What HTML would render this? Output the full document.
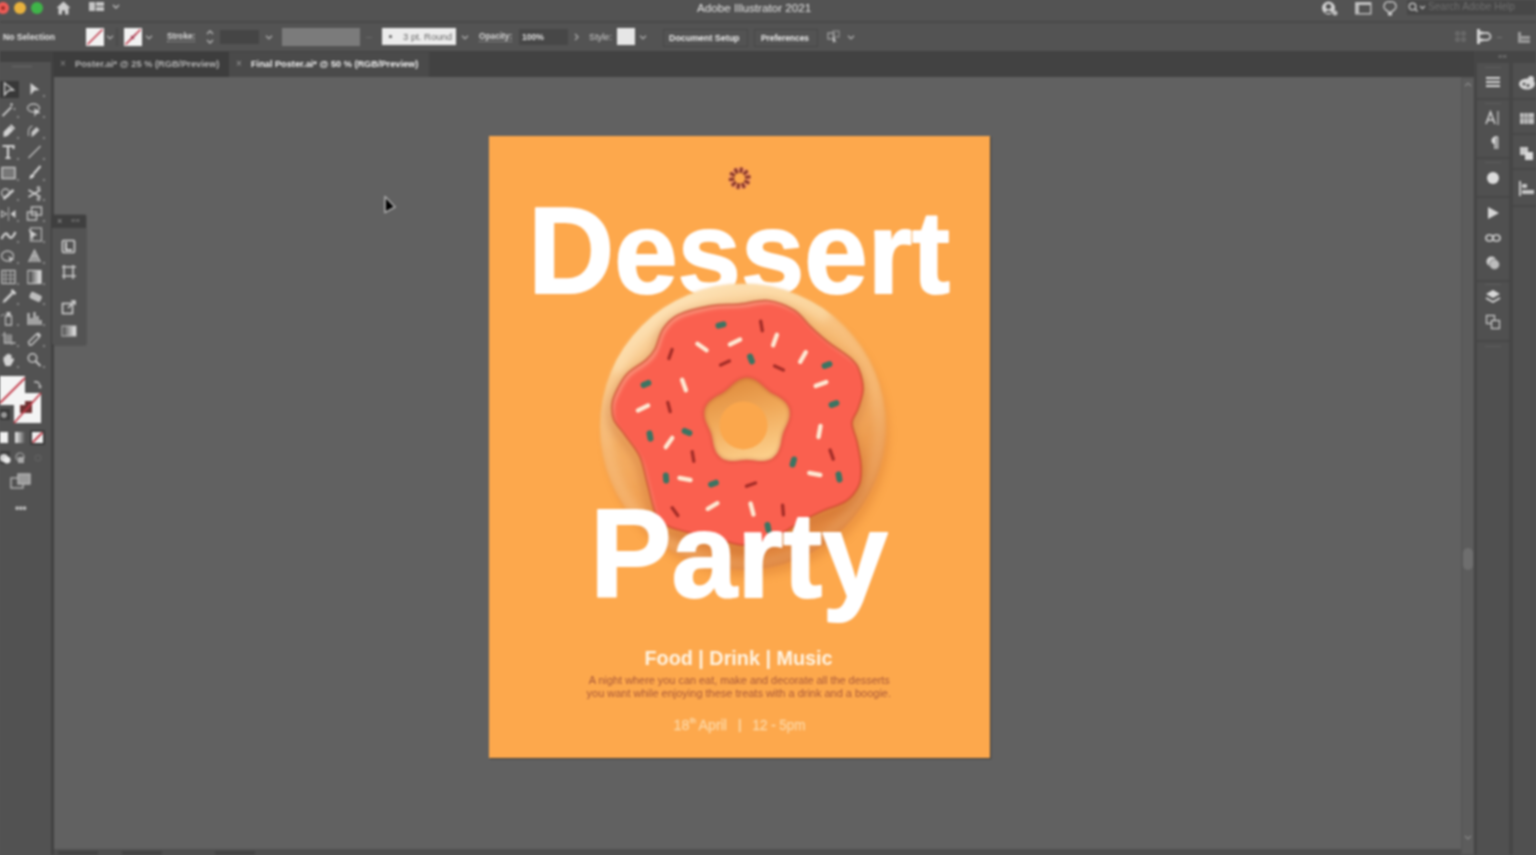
<!DOCTYPE html>
<html><head><meta charset="utf-8">
<style>
*{margin:0;padding:0;box-sizing:border-box}
html,body{width:1536px;height:855px;overflow:hidden;background:#555555;font-family:"Liberation Sans",sans-serif;position:relative}
.a{position:absolute}
.t{position:absolute;white-space:nowrap;color:#cfcfcf;font-size:9px;line-height:10px}
svg{position:absolute;overflow:visible}
</style></head><body>
<div id="root" style="position:absolute;left:0;top:0;width:1536px;height:855px;filter:blur(0.8px)">
<div class="a" style="left:0;top:0;width:1536px;height:855px;background:#616161"></div>
<div class="a" style="left:0;top:0;width:1536px;height:21px;background:#535353"></div>
<div class="a" style="left:0;top:21px;width:1536px;height:2px;background:#484848"></div>
<div class="a" style="left:-3px;top:2px;width:12px;height:12px;border-radius:50%;background:#EC5B56"></div>
<div class="a" style="left:1px;top:6px;width:4px;height:4px;border-radius:50%;background:#9a2a25"></div>
<div class="a" style="left:14px;top:2px;width:12px;height:12px;border-radius:50%;background:#E8B23E"></div>
<div class="a" style="left:31px;top:2px;width:12px;height:12px;border-radius:50%;background:#3FB449"></div>
<svg style="left:56px;top:1px" width="15" height="14" viewBox="0 0 15 14"><path d="M7.5 0.5 L14.5 7 L12.5 7 L12.5 13.5 L9 13.5 L9 9.5 L6 9.5 L6 13.5 L2.5 13.5 L2.5 7 L0.5 7 Z" fill="#cdcdcd"/></svg>
<svg style="left:89px;top:2px" width="32" height="10" viewBox="0 0 32 10"><rect x="0" y="0" width="6" height="9" fill="#c4c4c4"/><rect x="7" y="0" width="8" height="4" fill="#c4c4c4"/><rect x="7" y="5" width="8" height="4" fill="#c4c4c4"/><path d="M24 3 L27 6 L30 3" stroke="#bdbdbd" stroke-width="1.4" fill="none"/></svg>
<div class="t" style="left:697px;top:1px;font-size:11.7px;line-height:13px;color:#e2e2e2">Adobe Illustrator 2021</div>
<svg style="left:1321px;top:1px" width="18" height="15" viewBox="0 0 18 15"><circle cx="7.5" cy="7" r="6.5" fill="#cfcfcf"/><circle cx="7.5" cy="5.5" r="2.6" fill="#505050"/><path d="M3.5 12 Q7.5 7 11.5 12" fill="#505050"/><circle cx="14" cy="12" r="2.5" fill="#bdbdbd"/></svg>
<svg style="left:1355px;top:2px" width="17" height="13" viewBox="0 0 17 13"><rect x="0.8" y="0.8" width="15" height="11" fill="none" stroke="#c4c4c4" stroke-width="1.4"/><rect x="1" y="1" width="3" height="11" fill="#b8b8b8"/><rect x="1" y="1" width="15" height="2" fill="#c4c4c4"/></svg>
<svg style="left:1384px;top:1px" width="12" height="15" viewBox="0 0 12 15"><path d="M6 1 A4.5 4.5 0 0 1 9 9.5 L8 11 L4 11 L3 9.5 A4.5 4.5 0 0 1 6 1 Z" fill="none" stroke="#c8c8c8" stroke-width="1.4"/><rect x="4" y="12" width="4" height="2.5" fill="#d0d0d0"/></svg>
<div class="a" style="left:1407px;top:0;width:129px;height:15px;background:#474747"></div>
<svg style="left:1408px;top:2px" width="20" height="11" viewBox="0 0 20 11"><circle cx="4.5" cy="4.5" r="3.3" fill="none" stroke="#bbb" stroke-width="1.5"/><path d="M7 7 L9.5 9.5" stroke="#bbb" stroke-width="1.6"/><path d="M12 4 L14.5 6.5 L17 4" stroke="#bbb" stroke-width="1.3" fill="none"/></svg>
<div class="t" style="left:1428px;top:1px;font-size:10.1px;line-height:12px;color:#6e6e6e">Search Adobe Help</div>
<div class="a" style="left:0;top:23px;width:1536px;height:28px;background:#535353"></div>
<div class="t" style="left:3px;top:32px;font-size:8.6px;font-weight:bold;color:#e2e2e2">No Selection</div>
<svg style="left:86px;top:28px" width="18" height="18" viewBox="0 0 18 18"><rect x="0" y="0" width="18" height="18" fill="#f2f2f2"/><path d="M1.5 16.5 L16.5 1.5" stroke="#C0394A" stroke-width="1.6"/></svg>
<svg style="left:106px;top:35px" width="8" height="5" viewBox="0 0 8 5"><path d="M1 0.8 L4 3.8 L7 0.8" stroke="#a8a8a8" stroke-width="1.4" fill="none"/></svg>
<div class="a" style="left:116px;top:28px;width:2px;height:18px;background:#4a4a4a"></div>
<svg style="left:124px;top:28px" width="18" height="18" viewBox="0 0 18 18"><rect x="0" y="0" width="18" height="18" fill="#f2f2f2"/><path d="M1.5 16.5 L16.5 1.5" stroke="#C0394A" stroke-width="1.6"/></svg>
<svg style="left:145px;top:35px" width="8" height="5" viewBox="0 0 8 5"><path d="M1 0.8 L4 3.8 L7 0.8" stroke="#a8a8a8" stroke-width="1.4" fill="none"/></svg>
<svg style="left:127px;top:31px" width="12" height="12" viewBox="0 0 12 12"><path d="M3 9 L9 3 M4 5 L7 8" stroke="#a03048" stroke-width="1.2"/></svg>
<div class="t" style="left:167px;top:32px;font-size:8.2px;font-weight:bold;color:#dcdcdc;border-bottom:1px dotted #aaa;line-height:9px">Stroke:</div>
<svg style="left:206px;top:28px" width="8" height="18" viewBox="0 0 8 18"><path d="M1 6 L4 3 L7 6 M1 12 L4 15 L7 12" stroke="#b4b4b4" stroke-width="1.3" fill="none"/></svg>
<div class="a" style="left:220px;top:30px;width:39px;height:14px;background:#454545"></div>
<svg style="left:265px;top:35px" width="8" height="5" viewBox="0 0 8 5"><path d="M1 0.8 L4 3.8 L7 0.8" stroke="#a8a8a8" stroke-width="1.4" fill="none"/></svg>
<div class="a" style="left:282px;top:28px;width:78px;height:18px;background:#7b7b7b"></div>
<div class="a" style="left:366px;top:37px;width:6px;height:1px;background:#6a6a6a"></div>
<div class="a" style="left:382px;top:28px;width:74px;height:17px;background:#ececec"></div>
<div class="a" style="left:389px;top:35px;width:3px;height:3px;background:#555;border-radius:50%"></div>
<div class="t" style="left:403px;top:32px;font-size:9.5px;color:#666">3 pt. Round</div>
<svg style="left:461px;top:35px" width="8" height="5" viewBox="0 0 8 5"><path d="M1 0.8 L4 3.8 L7 0.8" stroke="#a8a8a8" stroke-width="1.4" fill="none"/></svg>
<div class="t" style="left:479px;top:32px;font-size:8.3px;font-weight:bold;color:#dcdcdc;border-bottom:1px dotted #aaa;line-height:9px">Opacity:</div>
<div class="a" style="left:519px;top:29px;width:49px;height:16px;background:#474747"></div>
<div class="t" style="left:522px;top:32px;font-size:8.6px;font-weight:bold;color:#e0e0e0">100%</div>
<svg style="left:574px;top:33px" width="5" height="8" viewBox="0 0 5 8"><path d="M1 1 L4 4 L1 7" stroke="#aaa" stroke-width="1.3" fill="none"/></svg>
<div class="t" style="left:589px;top:32px;font-size:9.2px;color:#cccccc">Style:</div>
<div class="a" style="left:617px;top:28px;width:18px;height:17px;background:#e6e6e6"></div>
<svg style="left:639px;top:35px" width="8" height="5" viewBox="0 0 8 5"><path d="M1 0.8 L4 3.8 L7 0.8" stroke="#a8a8a8" stroke-width="1.4" fill="none"/></svg>
<div class="a" style="left:663px;top:29px;width:85px;height:18px;border:1px solid #474747;background:#535353"></div>
<div class="t" style="left:669px;top:33px;font-size:8.9px;font-weight:bold;color:#ececec">Document Setup</div>
<div class="a" style="left:754px;top:29px;width:64px;height:18px;border:1px solid #474747;background:#535353"></div>
<div class="t" style="left:761px;top:33px;font-size:8.4px;font-weight:bold;color:#ececec">Preferences</div>
<svg style="left:827px;top:30px" width="14" height="14" viewBox="0 0 14 14"><rect x="1" y="3" width="6" height="6" fill="none" stroke="#aaa" stroke-width="1.2"/><rect x="6" y="1" width="6" height="6" fill="none" stroke="#999" stroke-width="1"/><path d="M6 6 L6 13 L8 11 L10 13" fill="#ccc"/></svg>
<svg style="left:847px;top:35px" width="8" height="5" viewBox="0 0 8 5"><path d="M1 0.8 L4 3.8 L7 0.8" stroke="#a8a8a8" stroke-width="1.4" fill="none"/></svg>
<svg style="left:1455px;top:31px" width="12" height="12" viewBox="0 0 12 12"><path d="M1 1h3v3h-3zM7 1h3v3h-3zM1 7h3v3h-3zM7 7h3v3h-3z" fill="none" stroke="#7d7d7d" stroke-width="1"/></svg>
<svg style="left:1477px;top:29px" width="15" height="15" viewBox="0 0 15 15"><rect x="0" y="0" width="3" height="15" fill="#d4d4d4"/><rect x="3" y="2.5" width="3" height="3" fill="#d4d4d4"/><rect x="3" y="9.5" width="3" height="3" fill="#d4d4d4"/><path d="M5 4 L10 4 A3.5 3.5 0 0 1 10 11 L5 11" stroke="#c8c8c8" stroke-width="1.8" fill="none"/></svg>
<div class="a" style="left:1497px;top:37px;width:5px;height:1px;background:#777"></div>
<svg style="left:1518px;top:32px" width="12" height="11" viewBox="0 0 12 11"><rect x="0" y="0" width="3" height="11" fill="#9a9a9a"/><rect x="3" y="4" width="9" height="3" fill="#9a9a9a"/><rect x="3" y="8" width="9" height="3" fill="#9a9a9a"/></svg>
<div class="a" style="left:0;top:51px;width:1536px;height:26px;background:#424242"></div>
<div class="a" style="left:53px;top:52px;width:176px;height:25px;background:#3d3d3d"></div>
<div class="a" style="left:229px;top:52px;width:200px;height:25px;background:#4a4a4a"></div>
<div class="t" style="left:60px;top:59px;font-size:10px;color:#8d8d8d">×</div>
<div class="t" style="left:75px;top:59px;font-size:9.25px;font-weight:bold;color:#b4b4b4">Poster.ai* @ 25 % (RGB/Preview)</div>
<div class="t" style="left:236px;top:59px;font-size:10px;color:#9d9d9d">×</div>
<div class="t" style="left:251px;top:59px;font-size:9.2px;font-weight:bold;color:#f0f0f0">Final Poster.ai* @ 50 % (RGB/Preview)</div>
<div class="a" style="left:0;top:62px;width:52px;height:793px;background:#525252"></div>
<div class="a" style="left:51px;top:62px;width:3px;height:793px;background:#414141"></div>
<div class="a" style="left:12px;top:66px;width:20px;height:1px;background:#6a6a6a"></div>
<div class="a" style="left:0;top:81px;width:19px;height:17px;background:#383838"></div>
<svg style="left:0px;top:81px" width="17" height="16" viewBox="0 0 16 16"><path d="M4 2 L13 9 L8 9.5 L4 14 Z" fill="none" stroke="#cfcfcf" stroke-width="1.4"/></svg>
<svg style="left:26px;top:81px" width="17" height="16" viewBox="0 0 16 16"><path d="M4 2 L13 9 L8 9.5 L4 14 Z" fill="#cfcfcf"/></svg>
<div class="a" style="left:43px;top:95px;width:2px;height:2px;background:#8a8a8a"></div>
<svg style="left:0px;top:102px" width="17" height="16" viewBox="0 0 16 16"><path d="M2 14 L11 5" stroke="#c4c4c4" stroke-width="2"/><path d="M11 1v3M9.5 2.5h3M14 6v2" stroke="#c4c4c4" stroke-width="1.2"/></svg>
<svg style="left:26px;top:102px" width="17" height="16" viewBox="0 0 16 16"><ellipse cx="7" cy="6" rx="6" ry="4" fill="none" stroke="#bbb" stroke-width="1.3"/><path d="M8 6 L14 11 L10 11.5 L8 15 Z" fill="#d0d0d0"/></svg>
<div class="a" style="left:17px;top:116px;width:2px;height:2px;background:#8a8a8a"></div>
<div class="a" style="left:43px;top:116px;width:2px;height:2px;background:#8a8a8a"></div>
<svg style="left:0px;top:123px" width="17" height="16" viewBox="0 0 16 16"><path d="M3 14 L3 9 L9 3 L13 7 L7 13 Z" fill="#d2d2d2"/><path d="M10 2 L14 6" stroke="#d2d2d2" stroke-width="2"/></svg>
<svg style="left:26px;top:123px" width="17" height="16" viewBox="0 0 16 16"><path d="M5 14 L5 9 L10 4 L13 7 L8 12 Z" fill="#c8c8c8"/><path d="M2 13 Q1 4 6 3" stroke="#bbb" stroke-width="1.1" fill="none"/></svg>
<div class="a" style="left:17px;top:137px;width:2px;height:2px;background:#8a8a8a"></div>
<div class="a" style="left:43px;top:137px;width:2px;height:2px;background:#8a8a8a"></div>
<svg style="left:0px;top:144px" width="17" height="16" viewBox="0 0 16 16"><path d="M2 2h11v3M7.5 2v12M5 14h5" stroke="#d0d0d0" stroke-width="2.2" fill="none"/></svg>
<svg style="left:26px;top:144px" width="17" height="16" viewBox="0 0 16 16"><path d="M2 14 L14 2" stroke="#bdbdbd" stroke-width="1.4"/></svg>
<div class="a" style="left:17px;top:158px;width:2px;height:2px;background:#8a8a8a"></div>
<div class="a" style="left:43px;top:158px;width:2px;height:2px;background:#8a8a8a"></div>
<svg style="left:0px;top:165px" width="17" height="16" viewBox="0 0 16 16"><rect x="1.5" y="2.5" width="13" height="11" fill="#777" stroke="#c8c8c8" stroke-width="1.4"/></svg>
<svg style="left:26px;top:165px" width="17" height="16" viewBox="0 0 16 16"><path d="M14 1 L7 9" stroke="#d0d0d0" stroke-width="2.2"/><path d="M3 14 Q3 9 7 9 L8 11 Q6 14 3 14Z" fill="#d8d8d8"/></svg>
<div class="a" style="left:17px;top:179px;width:2px;height:2px;background:#8a8a8a"></div>
<div class="a" style="left:43px;top:179px;width:2px;height:2px;background:#8a8a8a"></div>
<svg style="left:0px;top:185px" width="17" height="16" viewBox="0 0 16 16"><circle cx="5" cy="8" r="4" fill="none" stroke="#bbb" stroke-width="1.3"/><path d="M3 14 L13 5" stroke="#d0d0d0" stroke-width="2.4"/></svg>
<svg style="left:26px;top:185px" width="17" height="16" viewBox="0 0 16 16"><path d="M2 5 L14 12 M2 12 L14 5" stroke="#cfcfcf" stroke-width="1.6"/><circle cx="12" cy="3" r="2" fill="#aaa"/><circle cx="12" cy="14" r="2" fill="#aaa"/></svg>
<div class="a" style="left:17px;top:199px;width:2px;height:2px;background:#8a8a8a"></div>
<div class="a" style="left:43px;top:199px;width:2px;height:2px;background:#8a8a8a"></div>
<svg style="left:0px;top:206px" width="17" height="16" viewBox="0 0 16 16"><path d="M1 5 L1 11 L6 8Z" fill="none" stroke="#bbb" stroke-width="1.2"/><path d="M8 1v14" stroke="#aaa" stroke-width="1"/><path d="M15 4 L15 12 L10 8Z" fill="#d0d0d0"/></svg>
<svg style="left:26px;top:206px" width="17" height="16" viewBox="0 0 16 16"><rect x="1" y="6" width="9" height="8" fill="none" stroke="#c4c4c4" stroke-width="1.4"/><rect x="5" y="1" width="10" height="8" fill="none" stroke="#c4c4c4" stroke-width="1.4"/></svg>
<div class="a" style="left:17px;top:220px;width:2px;height:2px;background:#8a8a8a"></div>
<div class="a" style="left:43px;top:220px;width:2px;height:2px;background:#8a8a8a"></div>
<svg style="left:0px;top:227px" width="17" height="16" viewBox="0 0 16 16"><path d="M1 12 Q5 3 8 9 Q11 14 15 5" stroke="#cdcdcd" stroke-width="2.4" fill="none"/></svg>
<svg style="left:26px;top:227px" width="17" height="16" viewBox="0 0 16 16"><path d="M2 2 L11 8 L7 9 L6 14 Z" fill="#cfcfcf"/><rect x="4" y="1" width="11" height="13" fill="none" stroke="#bbb" stroke-width="1.2"/></svg>
<div class="a" style="left:17px;top:241px;width:2px;height:2px;background:#8a8a8a"></div>
<div class="a" style="left:43px;top:241px;width:2px;height:2px;background:#8a8a8a"></div>
<svg style="left:0px;top:248px" width="17" height="16" viewBox="0 0 16 16"><ellipse cx="7" cy="8" rx="6" ry="5" fill="none" stroke="#bbb" stroke-width="1.3"/><path d="M8 8 L14 12 L11 12 L10 15Z" fill="#d0d0d0"/></svg>
<svg style="left:26px;top:248px" width="17" height="16" viewBox="0 0 16 16"><path d="M2 14 L8 2 L14 14 Z" fill="#999"/><path d="M2 14 L8 2 L14 14 M5 8h6" stroke="#c0c0c0" stroke-width="1.1" fill="none"/></svg>
<div class="a" style="left:17px;top:262px;width:2px;height:2px;background:#8a8a8a"></div>
<div class="a" style="left:43px;top:262px;width:2px;height:2px;background:#8a8a8a"></div>
<svg style="left:0px;top:269px" width="17" height="16" viewBox="0 0 16 16"><rect x="1.5" y="1.5" width="13" height="13" fill="none" stroke="#bdbdbd" stroke-width="1.3"/><path d="M5 1.5v13M10 1.5v13M1.5 6h13M1.5 10h13" stroke="#aaa" stroke-width="1"/></svg>
<svg style="left:26px;top:269px" width="17" height="16" viewBox="0 0 16 16"><defs><linearGradient id="tg" x1="0" x2="1"><stop offset="0" stop-color="#333"/><stop offset="1" stop-color="#eee"/></linearGradient></defs><rect x="1.5" y="1.5" width="13" height="13" fill="url(#tg)" stroke="#c8c8c8" stroke-width="1.2"/></svg>
<div class="a" style="left:17px;top:283px;width:2px;height:2px;background:#8a8a8a"></div>
<div class="a" style="left:43px;top:283px;width:2px;height:2px;background:#8a8a8a"></div>
<svg style="left:0px;top:289px" width="17" height="16" viewBox="0 0 16 16"><path d="M2 14 L3 11 L11 3 L13 5 L5 13 Z" fill="#c8c8c8"/><path d="M11 1 L15 5" stroke="#d8d8d8" stroke-width="2.5"/></svg>
<svg style="left:26px;top:289px" width="17" height="16" viewBox="0 0 16 16"><rect x="3" y="4" width="12" height="7" rx="2" transform="rotate(25 8 8)" fill="#bdbdbd"/></svg>
<div class="a" style="left:17px;top:303px;width:2px;height:2px;background:#8a8a8a"></div>
<div class="a" style="left:43px;top:303px;width:2px;height:2px;background:#8a8a8a"></div>
<svg style="left:0px;top:310px" width="17" height="16" viewBox="0 0 16 16"><path d="M5 6h6v9h-6z" fill="none" stroke="#bbb" stroke-width="1.3"/><path d="M6 2h4v4h-4z" fill="#c8c8c8"/><path d="M0 6 L4 4" stroke="#aaa"/></svg>
<svg style="left:26px;top:310px" width="17" height="16" viewBox="0 0 16 16"><path d="M2 15V3M5 15V8M8 15V2M11 15V6M14 15V10" stroke="#c8c8c8" stroke-width="2"/></svg>
<div class="a" style="left:17px;top:324px;width:2px;height:2px;background:#8a8a8a"></div>
<div class="a" style="left:43px;top:324px;width:2px;height:2px;background:#8a8a8a"></div>
<svg style="left:0px;top:331px" width="17" height="16" viewBox="0 0 16 16"><path d="M4 1v11h11" stroke="#bdbdbd" stroke-width="1.3" fill="none"/><path d="M1 4h10v10" stroke="#aaa" stroke-width="1" fill="none"/><rect x="5" y="5" width="6" height="6" fill="#888"/></svg>
<svg style="left:26px;top:331px" width="17" height="16" viewBox="0 0 16 16"><path d="M3 14 L2 11 L10 3 L13 6 L5 14Z" fill="none" stroke="#c8c8c8" stroke-width="1.4"/><path d="M11 2 L14 5" stroke="#ccc" stroke-width="2"/></svg>
<div class="a" style="left:17px;top:345px;width:2px;height:2px;background:#8a8a8a"></div>
<div class="a" style="left:43px;top:345px;width:2px;height:2px;background:#8a8a8a"></div>
<svg style="left:0px;top:352px" width="17" height="16" viewBox="0 0 16 16"><path d="M3 9 L3 5 Q4 4 5 5 L5 3 Q6 2 7 3 L7 2 Q8 1 9 2 L9 3 Q10 2 11 3 L11 7 L13 6 Q14 7 13 9 L10 14 L5 14 Z" fill="#d4d4d4"/></svg>
<svg style="left:26px;top:352px" width="17" height="16" viewBox="0 0 16 16"><circle cx="6" cy="6" r="4.2" fill="none" stroke="#c4c4c4" stroke-width="1.6"/><path d="M9 9 L14 14" stroke="#c4c4c4" stroke-width="2"/></svg>
<div class="a" style="left:17px;top:366px;width:2px;height:2px;background:#8a8a8a"></div>
<div class="a" style="left:43px;top:366px;width:2px;height:2px;background:#8a8a8a"></div>
<svg style="left:0px;top:376px" width="46" height="50" viewBox="0 0 46 50"><rect x="14" y="17" width="27" height="30" fill="#f4f4f4"/><rect x="20" y="25" width="12" height="12" fill="#6e3232"/><path d="M14 47 L41 17" stroke="#C23A48" stroke-width="1.8"/><rect x="0" y="0" width="25" height="29" fill="#f4f4f4"/><path d="M0 27 L25 2" stroke="#C23A48" stroke-width="1.8"/><path d="M34 6 Q40 5 40 11" stroke="#bbb" stroke-width="1.6" fill="none"/><path d="M38 10 L40 13 L42 10" fill="#bbb"/><rect x="0" y="33" width="10" height="11" fill="#3a3a3a"/><circle cx="4" cy="39" r="3" fill="#999"/></svg>
<div class="a" style="left:0;top:432px;width:8px;height:11px;background:#f0f0f0"></div>
<div class="a" style="left:15px;top:432px;width:10px;height:11px;background:linear-gradient(90deg,#eee,#555)"></div>
<svg style="left:30px;top:430px" width="15" height="15" viewBox="0 0 15 15"><rect x="0" y="0" width="15" height="15" fill="#3a3a3a"/><rect x="2" y="2" width="11" height="11" fill="#f0f0f0"/><path d="M2.5 12.5 L12.5 2.5" stroke="#C23A48" stroke-width="1.8"/></svg>
<svg style="left:0px;top:451px" width="45" height="14" viewBox="0 0 45 14"><rect x="0" y="0" width="10" height="13" fill="#3d3d3d"/><circle cx="4" cy="7" r="4" fill="#d0d0d0"/><circle cx="7" cy="9" r="3.5" fill="#eaeaea"/><circle cx="20" cy="6" r="4" fill="none" stroke="#aaa" stroke-width="1.2"/><rect x="18" y="6" width="6" height="6" fill="#aaa"/><circle cx="38" cy="7" r="3" fill="none" stroke="#666" stroke-width="1"/></svg>
<svg style="left:10px;top:473px" width="22" height="16" viewBox="0 0 22 16"><rect x="1" y="5" width="12" height="10" fill="none" stroke="#bbb" stroke-width="1.3"/><rect x="8" y="1" width="12" height="10" fill="#999" stroke="#bbb" stroke-width="1.3"/></svg>
<div class="t" style="left:15px;top:503px;font-size:12px;font-weight:bold;color:#bdbdbd;letter-spacing:-0.5px">•••</div>
<div class="a" style="left:1461px;top:77px;width:14px;height:778px;background:#585858"></div>
<div class="a" style="left:1463px;top:79px;width:10px;height:774px;background:#5c5c5c"></div>
<svg style="left:1464px;top:82px" width="8" height="5" viewBox="0 0 8 5"><path d="M1 4 L4 1 L7 4" stroke="#888" stroke-width="1.2" fill="none"/></svg>
<svg style="left:1464px;top:835px" width="8" height="5" viewBox="0 0 8 5"><path d="M1 1 L4 4 L7 1" stroke="#888" stroke-width="1.2" fill="none"/></svg>
<div class="a" style="left:1463px;top:548px;width:10px;height:22px;border-radius:5px;background:#6e6e6e"></div>
<div class="a" style="left:1474px;top:51px;width:62px;height:804px;background:#464646"></div>
<div class="t" style="left:1498px;top:52px;font-size:8px;color:#8a8a8a">««</div>
<div class="a" style="left:1477px;top:63px;width:32px;height:792px;background:#505050"></div>
<div class="a" style="left:1513px;top:63px;width:23px;height:792px;background:#505050"></div>
<div class="a" style="left:1477px;top:98px;width:32px;height:2px;background:#474747"></div>
<div class="a" style="left:1477px;top:157px;width:32px;height:2px;background:#474747"></div>
<div class="a" style="left:1477px;top:196px;width:32px;height:2px;background:#474747"></div>
<div class="a" style="left:1477px;top:280px;width:32px;height:2px;background:#474747"></div>
<div class="a" style="left:1477px;top:340px;width:32px;height:2px;background:#474747"></div>
<div class="a" style="left:1513px;top:98px;width:23px;height:2px;background:#474747"></div>
<div class="a" style="left:1513px;top:133px;width:23px;height:2px;background:#474747"></div>
<div class="a" style="left:1513px;top:168px;width:23px;height:2px;background:#474747"></div>
<div class="a" style="left:1513px;top:205px;width:23px;height:2px;background:#474747"></div>
<div class="a" style="left:1485px;top:67px;width:16px;height:1px;background:#5e5e5e"></div>
<div class="a" style="left:1485px;top:103px;width:16px;height:1px;background:#5e5e5e"></div>
<div class="a" style="left:1485px;top:162px;width:16px;height:1px;background:#5e5e5e"></div>
<div class="a" style="left:1485px;top:284px;width:16px;height:1px;background:#5e5e5e"></div>
<div class="a" style="left:1485px;top:346px;width:16px;height:1px;background:#5e5e5e"></div>
<svg style="left:1485px;top:75px" width="16" height="16" viewBox="0 0 16 16"><path d="M1 3h14M1 7h14M1 11h14" stroke="#d8d8d8" stroke-width="1.8"/></svg>
<svg style="left:1485px;top:110px" width="16" height="16" viewBox="0 0 16 16"><path d="M1 14 L5.5 2 L10 14 M3 10h5" stroke="#d0d0d0" stroke-width="1.6" fill="none"/><path d="M13 1v14" stroke="#c8c8c8" stroke-width="1.2"/></svg>
<svg style="left:1485px;top:135px" width="16" height="16" viewBox="0 0 16 16"><path d="M9 2 L13 2 M10 2 V14 M12.5 2 V14" stroke="#d0d0d0" stroke-width="1.6" fill="none"/><path d="M10 2 A3.5 3.5 0 0 0 10 9 Z" fill="#d8d8d8"/></svg>
<svg style="left:1485px;top:170px" width="16" height="16" viewBox="0 0 16 16"><circle cx="8" cy="8" r="6" fill="#dcdcdc"/></svg>
<svg style="left:1485px;top:205px" width="16" height="16" viewBox="0 0 16 16"><path d="M3 2 L14 8 L3 14Z" fill="#d6d6d6"/></svg>
<svg style="left:1485px;top:230px" width="16" height="16" viewBox="0 0 16 16"><rect x="1" y="5" width="7" height="6" rx="3" fill="none" stroke="#cfcfcf" stroke-width="1.6"/><rect x="8" y="5" width="7" height="6" rx="3" fill="none" stroke="#cfcfcf" stroke-width="1.6"/></svg>
<svg style="left:1485px;top:255px" width="16" height="16" viewBox="0 0 16 16"><circle cx="6.5" cy="6.5" r="5" fill="#cfcfcf"/><circle cx="9.5" cy="9.5" r="5" fill="#bcbcbc" stroke="#555" stroke-width="0.6"/></svg>
<svg style="left:1485px;top:289px" width="16" height="16" viewBox="0 0 16 16"><path d="M8 1 L15 5 L8 9 L1 5Z" fill="#d8d8d8"/><path d="M1 9 L8 13 L15 9" stroke="#d8d8d8" stroke-width="1.8" fill="none"/></svg>
<svg style="left:1485px;top:314px" width="16" height="16" viewBox="0 0 16 16"><rect x="1.5" y="1.5" width="8" height="8" fill="none" stroke="#c8c8c8" stroke-width="1.3"/><rect x="6.5" y="6.5" width="8" height="8" fill="#505050" stroke="#c8c8c8" stroke-width="1.3"/></svg>
<svg style="left:1518px;top:75px" width="18" height="16" viewBox="0 0 18 16"><ellipse cx="9" cy="9" rx="8" ry="5.5" fill="#d4d4d4"/><circle cx="6" cy="9" r="1.5" fill="#505050"/><circle cx="10" cy="10.5" r="1.5" fill="#505050"/><circle cx="13" cy="4" r="3" fill="#d4d4d4"/></svg>
<svg style="left:1518px;top:110px" width="18" height="16" viewBox="0 0 18 16"><rect x="2" y="3" width="14" height="11" fill="#bdbdbd"/><path d="M6 3v11M10 3v11M2 8h14" stroke="#777" stroke-width="1"/></svg>
<svg style="left:1518px;top:145px" width="18" height="16" viewBox="0 0 18 16"><rect x="2" y="2" width="8" height="8" fill="#c8c8c8"/><rect x="7" y="7" width="8" height="8" fill="#dadada"/></svg>
<svg style="left:1518px;top:180px" width="18" height="16" viewBox="0 0 18 16"><rect x="1" y="1" width="2" height="15" fill="#c4c4c4"/><rect x="4" y="4" width="5" height="4" fill="#c4c4c4"/><rect x="4" y="10" width="12" height="4" fill="#c4c4c4"/></svg>
<div class="a" style="left:52px;top:215px;width:34px;height:130px;background:#535353;border-radius:2px;box-shadow:0 0 2px #3a3a3a"></div>
<div class="a" style="left:52px;top:215px;width:34px;height:13px;background:#3f3f3f"></div>
<div class="t" style="left:57px;top:216px;font-size:9px;color:#9a9a9a">×</div>
<div class="t" style="left:71px;top:216px;font-size:8px;color:#8a8a8a">««</div>
<svg style="left:61px;top:239px" width="16" height="16" viewBox="0 0 16 16"><rect x="1.5" y="1.5" width="12" height="12" rx="1" fill="none" stroke="#cfcfcf" stroke-width="1.6"/><path d="M5 3v8h6" stroke="#cfcfcf" stroke-width="2" fill="none"/></svg>
<svg style="left:61px;top:264px" width="16" height="16" viewBox="0 0 16 16"><path d="M3 1v14M12 1v14M1 3h14M1 12h14" stroke="#c8c8c8" stroke-width="1.6"/></svg>
<svg style="left:61px;top:299px" width="16" height="16" viewBox="0 0 16 16"><rect x="1.5" y="4.5" width="10" height="10" fill="none" stroke="#cfcfcf" stroke-width="1.6"/><path d="M7 9 L14 2 M10 2h4v4" stroke="#cfcfcf" stroke-width="1.6" fill="none"/></svg>
<svg style="left:61px;top:323px" width="16" height="16" viewBox="0 0 16 16"><defs><linearGradient id="fg" x1="0" x2="1"><stop offset="0" stop-color="#444"/><stop offset="1" stop-color="#eee"/></linearGradient></defs><rect x="1" y="3" width="14" height="10" fill="url(#fg)" stroke="#bbb" stroke-width="1"/></svg>
<div class="a" style="left:54px;top:849px;width:1407px;height:6px;background:#4f4f4f"></div>
<div class="a" style="left:58px;top:851px;width:40px;height:4px;background:#444"></div>
<div class="a" style="left:122px;top:851px;width:40px;height:4px;background:#444"></div>
<div class="a" style="left:215px;top:851px;width:40px;height:4px;background:#444"></div>
<svg style="left:380px;top:193px" width="18" height="22" viewBox="0 0 18 22"><path d="M5 3.5 L15 14 L5 19.5 Z" fill="#000" stroke="#a8a8a8" stroke-width="1.7" stroke-linejoin="round"/></svg>
<!-- POSTER -->
<div class="a" id="poster" style="left:489px;top:136px;width:501px;height:622px;background:#FDA84C;overflow:hidden;box-shadow:1px 1px 1px rgba(0,0,0,0.35)">
<svg width="501" height="622" viewBox="0 0 501 622" style="left:0;top:0">
<defs>
<radialGradient id="dough" cx="0.45" cy="0.42" r="0.56">
<stop offset="0" stop-color="#F2A656"/>
<stop offset="0.80" stop-color="#F0A355"/>
<stop offset="0.93" stop-color="#F7BE7A"/>
<stop offset="1" stop-color="#F6B46C"/>
</radialGradient>
<linearGradient id="rim" x1="0.25" y1="0.05" x2="0.75" y2="0.95">
<stop offset="0" stop-color="#FFEFD0" stop-opacity="0.45"/>
<stop offset="0.35" stop-color="#FFE0B0" stop-opacity="0"/>
<stop offset="0.6" stop-color="#D8782C" stop-opacity="0"/>
<stop offset="1" stop-color="#C8682A" stop-opacity="0.40"/>
</linearGradient>
<linearGradient id="holeg" x1="0.3" y1="0" x2="0.6" y2="1">
<stop offset="0" stop-color="#DE8A3C"/>
<stop offset="0.45" stop-color="#F0A858"/>
<stop offset="1" stop-color="#FCD08C"/>
</linearGradient>
<linearGradient id="icg" x1="0.3" y1="0" x2="0.7" y2="1">
<stop offset="0" stop-color="#F6705A"/>
<stop offset="0.3" stop-color="#F45F4C"/>
<stop offset="1" stop-color="#F25E4B"/>
</linearGradient>
<linearGradient id="doughlin" x1="0.35" y1="0" x2="0.6" y2="1">
<stop offset="0" stop-color="#FAD096"/>
<stop offset="0.3" stop-color="#F6B870"/>
<stop offset="0.65" stop-color="#F2A356"/>
<stop offset="1" stop-color="#EA8E42"/>
</linearGradient>
<filter id="blur1" x="-20%" y="-20%" width="140%" height="140%"><feGaussianBlur stdDeviation="1.5"/></filter>
<filter id="blur3" x="-20%" y="-20%" width="140%" height="140%"><feGaussianBlur stdDeviation="4"/></filter>
<filter id="blur06"><feGaussianBlur stdDeviation="0.6"/></filter>
</defs>
<g transform="translate(250.7,42.2)" stroke-width="3.2" stroke-linecap="round" filter="url(#blur06)"><circle r="8.4" fill="none" stroke="#EE8F6E" stroke-width="5" opacity="0.7"/><line x1="0" y1="-9.6" x2="0" y2="-6.6" stroke="#8C3A2C" transform="rotate(10)"/><line x1="0" y1="-9.6" x2="0" y2="-6.6" stroke="#8C3A2C" transform="rotate(46)"/><line x1="0" y1="-9.6" x2="0" y2="-6.6" stroke="#8C3A2C" transform="rotate(82)"/><line x1="0" y1="-9.6" x2="0" y2="-6.6" stroke="#8C3A2C" transform="rotate(118)"/><line x1="0" y1="-9.6" x2="0" y2="-6.6" stroke="#8C3A2C" transform="rotate(154)"/><line x1="0" y1="-9.6" x2="0" y2="-6.6" stroke="#8C3A2C" transform="rotate(190)"/><line x1="0" y1="-9.6" x2="0" y2="-6.6" stroke="#8C3A2C" transform="rotate(226)"/><line x1="0" y1="-9.6" x2="0" y2="-6.6" stroke="#8C3A2C" transform="rotate(262)"/><line x1="0" y1="-9.6" x2="0" y2="-6.6" stroke="#8C3A2C" transform="rotate(298)"/><line x1="0" y1="-9.6" x2="0" y2="-6.6" stroke="#8C3A2C" transform="rotate(334)"/></g>
<text x="39" y="157.2" font-family="Liberation Sans" font-weight="bold" font-size="122.5" fill="#FFFFFF" stroke="#FFFFFF" stroke-width="2" stroke-linejoin="round" textLength="422" lengthAdjust="spacingAndGlyphs">D<tspan font-size="117">essert</tspan></text>
<circle cx="258" cy="299" r="142" fill="#C86A28" opacity="0.30" filter="url(#blur3)"/>
<circle cx="254" cy="291" r="143" fill="url(#doughlin)" filter="url(#blur1)"/>
<clipPath id="dclip"><circle cx="254" cy="291" r="143"/></clipPath>
<g clip-path="url(#dclip)">
<circle cx="254" cy="291" r="137" fill="none" stroke="#F9C98E" stroke-width="10" opacity="0.45" filter="url(#blur3)"/>
<path d="M125,235 A140,140 0 0 1 340,180" fill="none" stroke="#FCDDA8" stroke-width="16" opacity="0.65" filter="url(#blur3)"/>
</g>
<circle cx="254" cy="291" r="143" fill="url(#rim)"/>
<path d="M251.0,168.0 C260.7,167.1 270.0,163.6 279.0,164.6 C288.0,165.6 297.8,169.6 305.0,174.0 C312.2,178.4 316.3,185.7 322.0,191.0 C327.7,196.3 332.2,200.6 339.0,206.0 C345.8,211.4 357.7,218.5 363.0,223.6 C368.3,228.7 369.2,231.4 371.0,236.5 C372.8,241.6 374.3,247.9 374.0,254.0 C373.7,260.1 370.8,267.5 369.0,273.0 C367.2,278.5 363.2,281.5 363.0,287.0 C362.8,292.5 366.5,298.8 368.0,306.0 C369.5,313.2 371.7,322.8 372.0,330.0 C372.3,337.2 372.5,343.2 370.0,349.0 C367.5,354.8 363.2,360.7 357.0,365.0 C350.8,369.3 340.7,371.5 333.0,375.0 C325.3,378.5 318.8,381.7 311.0,386.0 C303.2,390.3 295.2,397.2 286.0,401.0 C276.8,404.8 265.0,408.5 256.0,409.0 C247.0,409.5 240.3,405.8 232.0,404.0 C223.7,402.2 214.5,400.2 206.0,398.0 C197.5,395.8 187.3,393.8 181.0,391.0 C174.7,388.2 171.7,387.8 168.0,381.0 C164.3,374.2 161.8,360.0 159.0,350.0 C156.2,340.0 154.8,329.5 151.0,321.0 C147.2,312.5 140.3,305.2 136.0,299.0 C131.7,292.8 127.2,289.0 125.0,284.0 C122.8,279.0 122.7,273.7 123.0,269.0 C123.3,264.3 124.5,261.2 127.0,256.0 C129.5,250.8 133.0,243.3 138.0,238.0 C143.0,232.7 152.3,228.2 157.0,224.0 C161.7,219.8 163.2,218.2 166.0,213.0 C168.8,207.8 170.2,198.7 174.0,193.0 C177.8,187.3 181.2,182.8 189.0,179.0 C196.8,175.2 210.7,171.8 221.0,170.0 C231.3,168.2 241.3,168.9 251.0,168.0Z" fill="none" stroke="#B85A28" stroke-width="8" opacity="0.35" transform="translate(-1,5)" filter="url(#blur3)"/>
<clipPath id="icclip"><path d="M251.0,168.0 C260.7,167.1 270.0,163.6 279.0,164.6 C288.0,165.6 297.8,169.6 305.0,174.0 C312.2,178.4 316.3,185.7 322.0,191.0 C327.7,196.3 332.2,200.6 339.0,206.0 C345.8,211.4 357.7,218.5 363.0,223.6 C368.3,228.7 369.2,231.4 371.0,236.5 C372.8,241.6 374.3,247.9 374.0,254.0 C373.7,260.1 370.8,267.5 369.0,273.0 C367.2,278.5 363.2,281.5 363.0,287.0 C362.8,292.5 366.5,298.8 368.0,306.0 C369.5,313.2 371.7,322.8 372.0,330.0 C372.3,337.2 372.5,343.2 370.0,349.0 C367.5,354.8 363.2,360.7 357.0,365.0 C350.8,369.3 340.7,371.5 333.0,375.0 C325.3,378.5 318.8,381.7 311.0,386.0 C303.2,390.3 295.2,397.2 286.0,401.0 C276.8,404.8 265.0,408.5 256.0,409.0 C247.0,409.5 240.3,405.8 232.0,404.0 C223.7,402.2 214.5,400.2 206.0,398.0 C197.5,395.8 187.3,393.8 181.0,391.0 C174.7,388.2 171.7,387.8 168.0,381.0 C164.3,374.2 161.8,360.0 159.0,350.0 C156.2,340.0 154.8,329.5 151.0,321.0 C147.2,312.5 140.3,305.2 136.0,299.0 C131.7,292.8 127.2,289.0 125.0,284.0 C122.8,279.0 122.7,273.7 123.0,269.0 C123.3,264.3 124.5,261.2 127.0,256.0 C129.5,250.8 133.0,243.3 138.0,238.0 C143.0,232.7 152.3,228.2 157.0,224.0 C161.7,219.8 163.2,218.2 166.0,213.0 C168.8,207.8 170.2,198.7 174.0,193.0 C177.8,187.3 181.2,182.8 189.0,179.0 C196.8,175.2 210.7,171.8 221.0,170.0 C231.3,168.2 241.3,168.9 251.0,168.0Z"/></clipPath>
<path d="M251.0,168.0 C260.7,167.1 270.0,163.6 279.0,164.6 C288.0,165.6 297.8,169.6 305.0,174.0 C312.2,178.4 316.3,185.7 322.0,191.0 C327.7,196.3 332.2,200.6 339.0,206.0 C345.8,211.4 357.7,218.5 363.0,223.6 C368.3,228.7 369.2,231.4 371.0,236.5 C372.8,241.6 374.3,247.9 374.0,254.0 C373.7,260.1 370.8,267.5 369.0,273.0 C367.2,278.5 363.2,281.5 363.0,287.0 C362.8,292.5 366.5,298.8 368.0,306.0 C369.5,313.2 371.7,322.8 372.0,330.0 C372.3,337.2 372.5,343.2 370.0,349.0 C367.5,354.8 363.2,360.7 357.0,365.0 C350.8,369.3 340.7,371.5 333.0,375.0 C325.3,378.5 318.8,381.7 311.0,386.0 C303.2,390.3 295.2,397.2 286.0,401.0 C276.8,404.8 265.0,408.5 256.0,409.0 C247.0,409.5 240.3,405.8 232.0,404.0 C223.7,402.2 214.5,400.2 206.0,398.0 C197.5,395.8 187.3,393.8 181.0,391.0 C174.7,388.2 171.7,387.8 168.0,381.0 C164.3,374.2 161.8,360.0 159.0,350.0 C156.2,340.0 154.8,329.5 151.0,321.0 C147.2,312.5 140.3,305.2 136.0,299.0 C131.7,292.8 127.2,289.0 125.0,284.0 C122.8,279.0 122.7,273.7 123.0,269.0 C123.3,264.3 124.5,261.2 127.0,256.0 C129.5,250.8 133.0,243.3 138.0,238.0 C143.0,232.7 152.3,228.2 157.0,224.0 C161.7,219.8 163.2,218.2 166.0,213.0 C168.8,207.8 170.2,198.7 174.0,193.0 C177.8,187.3 181.2,182.8 189.0,179.0 C196.8,175.2 210.7,171.8 221.0,170.0 C231.3,168.2 241.3,168.9 251.0,168.0Z" fill="#FA8C74"/>
<g clip-path="url(#icclip)"><path d="M251.0,168.0 C260.7,167.1 270.0,163.6 279.0,164.6 C288.0,165.6 297.8,169.6 305.0,174.0 C312.2,178.4 316.3,185.7 322.0,191.0 C327.7,196.3 332.2,200.6 339.0,206.0 C345.8,211.4 357.7,218.5 363.0,223.6 C368.3,228.7 369.2,231.4 371.0,236.5 C372.8,241.6 374.3,247.9 374.0,254.0 C373.7,260.1 370.8,267.5 369.0,273.0 C367.2,278.5 363.2,281.5 363.0,287.0 C362.8,292.5 366.5,298.8 368.0,306.0 C369.5,313.2 371.7,322.8 372.0,330.0 C372.3,337.2 372.5,343.2 370.0,349.0 C367.5,354.8 363.2,360.7 357.0,365.0 C350.8,369.3 340.7,371.5 333.0,375.0 C325.3,378.5 318.8,381.7 311.0,386.0 C303.2,390.3 295.2,397.2 286.0,401.0 C276.8,404.8 265.0,408.5 256.0,409.0 C247.0,409.5 240.3,405.8 232.0,404.0 C223.7,402.2 214.5,400.2 206.0,398.0 C197.5,395.8 187.3,393.8 181.0,391.0 C174.7,388.2 171.7,387.8 168.0,381.0 C164.3,374.2 161.8,360.0 159.0,350.0 C156.2,340.0 154.8,329.5 151.0,321.0 C147.2,312.5 140.3,305.2 136.0,299.0 C131.7,292.8 127.2,289.0 125.0,284.0 C122.8,279.0 122.7,273.7 123.0,269.0 C123.3,264.3 124.5,261.2 127.0,256.0 C129.5,250.8 133.0,243.3 138.0,238.0 C143.0,232.7 152.3,228.2 157.0,224.0 C161.7,219.8 163.2,218.2 166.0,213.0 C168.8,207.8 170.2,198.7 174.0,193.0 C177.8,187.3 181.2,182.8 189.0,179.0 C196.8,175.2 210.7,171.8 221.0,170.0 C231.3,168.2 241.3,168.9 251.0,168.0Z" fill="#FA604F" transform="translate(2.5,3.5)" filter="url(#blur1)"/></g>
<path d="M251.0,168.0 C260.7,167.1 270.0,163.6 279.0,164.6 C288.0,165.6 297.8,169.6 305.0,174.0 C312.2,178.4 316.3,185.7 322.0,191.0 C327.7,196.3 332.2,200.6 339.0,206.0 C345.8,211.4 357.7,218.5 363.0,223.6 C368.3,228.7 369.2,231.4 371.0,236.5 C372.8,241.6 374.3,247.9 374.0,254.0 C373.7,260.1 370.8,267.5 369.0,273.0 C367.2,278.5 363.2,281.5 363.0,287.0 C362.8,292.5 366.5,298.8 368.0,306.0 C369.5,313.2 371.7,322.8 372.0,330.0 C372.3,337.2 372.5,343.2 370.0,349.0 C367.5,354.8 363.2,360.7 357.0,365.0 C350.8,369.3 340.7,371.5 333.0,375.0 C325.3,378.5 318.8,381.7 311.0,386.0 C303.2,390.3 295.2,397.2 286.0,401.0 C276.8,404.8 265.0,408.5 256.0,409.0 C247.0,409.5 240.3,405.8 232.0,404.0 C223.7,402.2 214.5,400.2 206.0,398.0 C197.5,395.8 187.3,393.8 181.0,391.0 C174.7,388.2 171.7,387.8 168.0,381.0 C164.3,374.2 161.8,360.0 159.0,350.0 C156.2,340.0 154.8,329.5 151.0,321.0 C147.2,312.5 140.3,305.2 136.0,299.0 C131.7,292.8 127.2,289.0 125.0,284.0 C122.8,279.0 122.7,273.7 123.0,269.0 C123.3,264.3 124.5,261.2 127.0,256.0 C129.5,250.8 133.0,243.3 138.0,238.0 C143.0,232.7 152.3,228.2 157.0,224.0 C161.7,219.8 163.2,218.2 166.0,213.0 C168.8,207.8 170.2,198.7 174.0,193.0 C177.8,187.3 181.2,182.8 189.0,179.0 C196.8,175.2 210.7,171.8 221.0,170.0 C231.3,168.2 241.3,168.9 251.0,168.0Z" fill="none" stroke="#C8442C" stroke-width="2.4" opacity="0.55" filter="url(#blur06)"/>
<path d="M299.0,286.0 C298.3,288.1 297.1,290.1 296.3,292.1 C295.4,294.0 294.6,295.8 293.9,297.7 C293.3,299.6 293.0,301.5 292.5,303.6 C292.1,305.7 291.8,307.9 291.2,310.1 C290.5,312.3 289.8,314.6 288.6,316.6 C287.4,318.5 285.8,320.4 284.0,321.8 C282.2,323.1 279.9,324.0 277.6,324.5 C275.4,325.1 272.9,325.0 270.7,325.0 C268.4,324.9 266.2,324.5 264.1,324.3 C261.9,324.1 260.0,323.8 258.0,323.8 C256.0,323.8 254.1,324.1 251.9,324.3 C249.8,324.5 247.6,324.9 245.3,325.0 C243.1,325.0 240.6,325.1 238.4,324.5 C236.1,324.0 233.8,323.1 232.0,321.8 C230.2,320.4 228.6,318.5 227.4,316.6 C226.2,314.6 225.5,312.3 224.8,310.1 C224.2,307.9 223.9,305.7 223.5,303.6 C223.0,301.5 222.7,299.6 222.1,297.7 C221.4,295.8 220.6,294.0 219.7,292.1 C218.9,290.1 217.7,288.1 217.0,286.0 C216.3,283.9 215.4,281.5 215.3,279.2 C215.1,277.0 215.3,274.5 216.0,272.3 C216.7,270.2 218.0,268.1 219.5,266.4 C220.9,264.6 223.0,263.2 224.8,261.9 C226.7,260.6 228.8,259.7 230.6,258.6 C232.4,257.5 234.1,256.6 235.8,255.4 C237.4,254.2 238.8,252.9 240.4,251.5 C242.0,250.1 243.5,248.4 245.3,247.0 C247.1,245.6 249.1,244.1 251.2,243.3 C253.3,242.4 255.7,241.8 258.0,241.8 C260.3,241.8 262.7,242.4 264.8,243.3 C266.9,244.1 268.9,245.6 270.7,247.0 C272.5,248.4 274.0,250.1 275.6,251.5 C277.2,252.9 278.6,254.2 280.2,255.4 C281.9,256.6 283.6,257.5 285.4,258.6 C287.2,259.7 289.3,260.6 291.2,261.9 C293.0,263.2 295.1,264.6 296.5,266.4 C298.0,268.1 299.3,270.2 300.0,272.3 C300.7,274.5 300.9,277.0 300.7,279.2 C300.6,281.5 299.7,283.9 299.0,286.0Z" fill="url(#holeg)"/>
<path d="M299.0,286.0 C298.3,288.1 297.1,290.1 296.3,292.1 C295.4,294.0 294.6,295.8 293.9,297.7 C293.3,299.6 293.0,301.5 292.5,303.6 C292.1,305.7 291.8,307.9 291.2,310.1 C290.5,312.3 289.8,314.6 288.6,316.6 C287.4,318.5 285.8,320.4 284.0,321.8 C282.2,323.1 279.9,324.0 277.6,324.5 C275.4,325.1 272.9,325.0 270.7,325.0 C268.4,324.9 266.2,324.5 264.1,324.3 C261.9,324.1 260.0,323.8 258.0,323.8 C256.0,323.8 254.1,324.1 251.9,324.3 C249.8,324.5 247.6,324.9 245.3,325.0 C243.1,325.0 240.6,325.1 238.4,324.5 C236.1,324.0 233.8,323.1 232.0,321.8 C230.2,320.4 228.6,318.5 227.4,316.6 C226.2,314.6 225.5,312.3 224.8,310.1 C224.2,307.9 223.9,305.7 223.5,303.6 C223.0,301.5 222.7,299.6 222.1,297.7 C221.4,295.8 220.6,294.0 219.7,292.1 C218.9,290.1 217.7,288.1 217.0,286.0 C216.3,283.9 215.4,281.5 215.3,279.2 C215.1,277.0 215.3,274.5 216.0,272.3 C216.7,270.2 218.0,268.1 219.5,266.4 C220.9,264.6 223.0,263.2 224.8,261.9 C226.7,260.6 228.8,259.7 230.6,258.6 C232.4,257.5 234.1,256.6 235.8,255.4 C237.4,254.2 238.8,252.9 240.4,251.5 C242.0,250.1 243.5,248.4 245.3,247.0 C247.1,245.6 249.1,244.1 251.2,243.3 C253.3,242.4 255.7,241.8 258.0,241.8 C260.3,241.8 262.7,242.4 264.8,243.3 C266.9,244.1 268.9,245.6 270.7,247.0 C272.5,248.4 274.0,250.1 275.6,251.5 C277.2,252.9 278.6,254.2 280.2,255.4 C281.9,256.6 283.6,257.5 285.4,258.6 C287.2,259.7 289.3,260.6 291.2,261.9 C293.0,263.2 295.1,264.6 296.5,266.4 C298.0,268.1 299.3,270.2 300.0,272.3 C300.7,274.5 300.9,277.0 300.7,279.2 C300.6,281.5 299.7,283.9 299.0,286.0Z" fill="none" stroke="#B04028" stroke-width="3" opacity="0.35" filter="url(#blur1)"/>
<circle cx="254.5" cy="289.4" r="24" fill="#FBA74C"/>
<g stroke-linecap="round">
<line x1="229.5" y1="189.7" x2="234.5" y2="188.3" stroke="#3C7462" stroke-width="6.0"/>
<line x1="208.4" y1="207.8" x2="217.6" y2="214.2" stroke="#FDE8D2" stroke-width="4.4"/>
<line x1="240.9" y1="208.4" x2="251.1" y2="203.6" stroke="#FDE8D2" stroke-width="4.4"/>
<line x1="179.9" y1="222.5" x2="183.1" y2="213.5" stroke="#A52E28" stroke-width="3.4"/>
<line x1="231.6" y1="229.0" x2="240.4" y2="225.0" stroke="#A52E28" stroke-width="3.4"/>
<line x1="154.6" y1="249.1" x2="159.4" y2="246.9" stroke="#3C7462" stroke-width="6.0"/>
<line x1="193.1" y1="243.7" x2="196.9" y2="254.3" stroke="#FDE8D2" stroke-width="4.4"/>
<line x1="148.9" y1="274.4" x2="159.1" y2="269.6" stroke="#FDE8D2" stroke-width="4.4"/>
<line x1="178.8" y1="266.4" x2="181.2" y2="275.6" stroke="#A52E28" stroke-width="3.4"/>
<line x1="195.6" y1="294.9" x2="200.4" y2="297.1" stroke="#3C7462" stroke-width="6.0"/>
<line x1="160.5" y1="297.4" x2="161.5" y2="302.6" stroke="#3C7462" stroke-width="6.0"/>
<line x1="271.7" y1="185.3" x2="273.3" y2="194.7" stroke="#A52E28" stroke-width="3.4"/>
<line x1="284.1" y1="209.3" x2="287.9" y2="198.7" stroke="#FDE8D2" stroke-width="4.4"/>
<line x1="311.2" y1="225.8" x2="316.8" y2="216.2" stroke="#FDE8D2" stroke-width="4.4"/>
<line x1="261.1" y1="220.6" x2="262.9" y2="225.4" stroke="#3C7462" stroke-width="6.0"/>
<line x1="285.6" y1="230.0" x2="294.4" y2="234.0" stroke="#A52E28" stroke-width="3.4"/>
<line x1="335.6" y1="229.9" x2="340.4" y2="228.1" stroke="#3C7462" stroke-width="6.0"/>
<line x1="326.7" y1="249.9" x2="337.3" y2="246.1" stroke="#FDE8D2" stroke-width="4.4"/>
<line x1="342.6" y1="268.9" x2="347.4" y2="267.1" stroke="#3C7462" stroke-width="6.0"/>
<line x1="329.5" y1="301.0" x2="331.5" y2="290.0" stroke="#FDE8D2" stroke-width="4.4"/>
<line x1="176.8" y1="311.1" x2="183.2" y2="301.9" stroke="#FDE8D2" stroke-width="4.4"/>
<line x1="203.2" y1="315.8" x2="204.8" y2="325.2" stroke="#A52E28" stroke-width="3.4"/>
<line x1="176.8" y1="339.4" x2="177.2" y2="344.6" stroke="#3C7462" stroke-width="6.0"/>
<line x1="190.5" y1="342.0" x2="201.5" y2="344.0" stroke="#FDE8D2" stroke-width="4.4"/>
<line x1="222.1" y1="348.5" x2="226.9" y2="346.7" stroke="#3C7462" stroke-width="6.0"/>
<line x1="218.8" y1="372.8" x2="228.4" y2="367.2" stroke="#FDE8D2" stroke-width="4.4"/>
<line x1="183.2" y1="371.8" x2="188.8" y2="379.6" stroke="#A52E28" stroke-width="3.4"/>
<line x1="341.1" y1="314.1" x2="344.3" y2="323.1" stroke="#A52E28" stroke-width="3.4"/>
<line x1="303.6" y1="328.5" x2="305.0" y2="323.5" stroke="#3C7462" stroke-width="6.0"/>
<line x1="320.3" y1="337.0" x2="331.3" y2="339.0" stroke="#FDE8D2" stroke-width="4.4"/>
<line x1="349.5" y1="338.4" x2="350.5" y2="343.6" stroke="#3C7462" stroke-width="6.0"/>
<line x1="257.5" y1="350.2" x2="266.5" y2="347.0" stroke="#A52E28" stroke-width="3.4"/>
<line x1="261.6" y1="367.6" x2="264.4" y2="378.4" stroke="#FDE8D2" stroke-width="4.4"/>
<line x1="293.6" y1="369.2" x2="294.4" y2="378.8" stroke="#A52E28" stroke-width="3.4"/>
<line x1="278.5" y1="389.0" x2="279.5" y2="394.2" stroke="#3C7462" stroke-width="6.0"/>
</g>
<text x="101" y="461.2" font-family="Liberation Sans" font-weight="bold" font-size="125.5" fill="#FFFFFF" stroke="#FFFFFF" stroke-width="2" stroke-linejoin="round" textLength="298" lengthAdjust="spacingAndGlyphs">P<tspan font-size="121">arty</tspan></text>
<text x="155.5" y="528.9" font-family="Liberation Sans" font-weight="bold" font-size="20.5" fill="#FFF4E2" textLength="188" lengthAdjust="spacingAndGlyphs">Food | Drink | Music</text>
<text x="99.8" y="547.8" font-family="Liberation Sans" font-size="10" fill="#A9583A" textLength="301" lengthAdjust="spacingAndGlyphs">A night where you can eat, make and decorate all the desserts</text>
<text x="97.6" y="561" font-family="Liberation Sans" font-size="10" fill="#A9583A" textLength="304.4" lengthAdjust="spacingAndGlyphs">you want while enjoying these treats with a drink and a boogie.</text>
<g font-family="Liberation Sans" fill="#FDD7A4" stroke="#FDD7A4" stroke-width="0.3">
<text x="184.5" y="593.5" font-size="15.5" textLength="16" lengthAdjust="spacingAndGlyphs">18</text>
<text x="201" y="587" font-size="7">th</text>
<text x="209.5" y="593.5" font-size="15.5" textLength="28.5" lengthAdjust="spacingAndGlyphs">April</text>
<rect x="250" y="583" width="1.6" height="13" fill="#FDD7A4"/>
<text x="263.5" y="593.5" font-size="15.5" textLength="53" lengthAdjust="spacingAndGlyphs">12 - 5pm</text>
</g>
</svg>
</div>
</div>
</body></html>
